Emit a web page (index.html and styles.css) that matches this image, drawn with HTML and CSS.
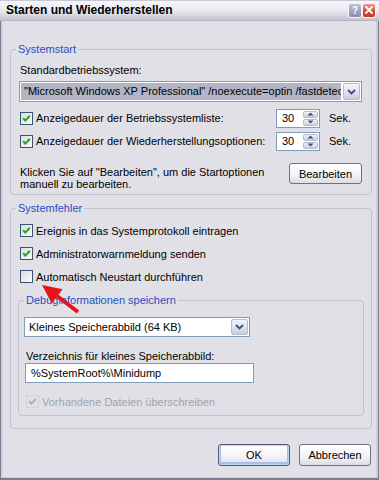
FILE: index.html
```html
<!DOCTYPE html>
<html lang="de">
<head>
<meta charset="utf-8">
<title>Starten und Wiederherstellen</title>
<link rel="stylesheet" href="styles.css">
</head>
<body>
<div class="window">
  <div class="titlebar">
    <span class="title">Starten und Wiederherstellen</span>
    <div class="caption-btns">
      <span class="cap-btn help">?</span>
      <span class="cap-btn close"><svg width="8" height="8" viewBox="0 0 8 8"><path d="M1 1 L7 7 M7 1 L1 7" stroke="#fff" stroke-width="1.8" stroke-linecap="square"/></svg></span>
    </div>
  </div>
  <div class="client">
    <fieldset class="group start">
      <legend>Systemstart</legend>
      <div class="label first">Standardbetriebssystem:</div>
      <div class="combo wide">
        <span class="combo-text selected">"Microsoft Windows XP Professional" /noexecute=optin /fastdetect</span>
        <span class="dd-btn"><svg width="9" height="6" viewBox="0 0 9 6"><path d="M1 1 L4.5 4.5 L8 1" fill="none" stroke="#3f4f72" stroke-width="1.8"/></svg></span>
      </div>
      <div class="spin-row">
        <span class="check on"><svg width="11" height="11" viewBox="0 0 11 11"><path d="M2.2 5.2 L4.4 7.6 L8.8 2.8" fill="none" stroke="#22a322" stroke-width="2"/></svg></span>
        <span class="row-label">Anzeigedauer der Betriebssystemliste:</span>
        <span class="spin"><span class="spin-val">30</span><span class="spin-arrows"><span class="arr"><svg width="7" height="4" viewBox="0 0 7 4"><path d="M0.5 3.5 L3.5 0.5 L6.5 3.5Z" fill="#3f4f72"/></svg></span><span class="arr"><svg width="7" height="4" viewBox="0 0 7 4"><path d="M0.5 0.5 L3.5 3.5 L6.5 0.5Z" fill="#3f4f72"/></svg></span></span></span>
        <span class="unit">Sek.</span>
      </div>
      <div class="spin-row second">
        <span class="check on"><svg width="11" height="11" viewBox="0 0 11 11"><path d="M2.2 5.2 L4.4 7.6 L8.8 2.8" fill="none" stroke="#22a322" stroke-width="2"/></svg></span>
        <span class="row-label">Anzeigedauer der Wiederherstellungsoptionen:</span>
        <span class="spin"><span class="spin-val">30</span><span class="spin-arrows"><span class="arr"><svg width="7" height="4" viewBox="0 0 7 4"><path d="M0.5 3.5 L3.5 0.5 L6.5 3.5Z" fill="#3f4f72"/></svg></span><span class="arr"><svg width="7" height="4" viewBox="0 0 7 4"><path d="M0.5 0.5 L3.5 3.5 L6.5 0.5Z" fill="#3f4f72"/></svg></span></span></span>
        <span class="unit">Sek.</span>
      </div>
      <div class="edit-row">
        <p>Klicken Sie auf "Bearbeiten", um die Startoptionen<br>manuell zu bearbeiten.</p>
        <button class="xp-btn">Bearbeiten</button>
      </div>
    </fieldset>

    <fieldset class="group errors">
      <legend>Systemfehler</legend>
      <div class="crow first">
        <span class="check on"><svg width="11" height="11" viewBox="0 0 11 11"><path d="M2.2 5.2 L4.4 7.6 L8.8 2.8" fill="none" stroke="#22a322" stroke-width="2"/></svg></span>
        <span class="row-label">Ereignis in das Systemprotokoll eintragen</span>
      </div>
      <div class="crow">
        <span class="check on"><svg width="11" height="11" viewBox="0 0 11 11"><path d="M2.2 5.2 L4.4 7.6 L8.8 2.8" fill="none" stroke="#22a322" stroke-width="2"/></svg></span>
        <span class="row-label">Administratorwarnmeldung senden</span>
      </div>
      <div class="crow">
        <span class="check"></span>
        <span class="row-label">Automatisch Neustart durchführen</span>
      </div>

      <fieldset class="group debug">
        <legend>Debuginformationen speichern</legend>
        <div class="combo small">
          <span class="combo-text">Kleines Speicherabbild (64 KB)</span>
          <span class="dd-btn"><svg width="9" height="6" viewBox="0 0 9 6"><path d="M1 1 L4.5 4.5 L8 1" fill="none" stroke="#3f4f72" stroke-width="1.8"/></svg></span>
        </div>
        <div class="label dir">Verzeichnis für kleines Speicherabbild:</div>
        <div class="edit">%SystemRoot%\Minidump</div>
        <div class="crow disabled">
          <span class="check dis"><svg width="11" height="11" viewBox="0 0 11 11"><path d="M2.2 5.2 L4.4 7.6 L8.8 2.8" fill="none" stroke="#aeaeb8" stroke-width="2"/></svg></span>
          <span class="row-label">Vorhandene Dateien überschreiben</span>
        </div>
      </fieldset>
    </fieldset>

    <div class="dialog-btns">
      <button class="xp-btn default">OK</button>
      <button class="xp-btn">Abbrechen</button>
    </div>
  </div>

  <svg class="annotation" width="379" height="480" viewBox="0 0 379 480">
    <line x1="78" y1="312" x2="57" y2="296" stroke="#e8141c" stroke-width="4"/>
    <polygon points="42,285 62.6,289.2 51.8,303.6" fill="#e8141c"/>
  </svg>
</div>
</body>
</html>
```

FILE: styles.css
```css
* { box-sizing: border-box; }
html, body { margin: 0; padding: 0; }
body {
  width: 379px;
  height: 480px;
  overflow: hidden;
  font-family: "Liberation Sans", Arial, sans-serif;
  font-size: 11px;
  color: #000;
  background: #fff;
}
.window {
  position: relative;
  width: 379px;
  height: 480px;
  background: #e1e0e6;
  box-shadow: inset 1px 0 0 #7c7c90, inset -1px 0 0 #7c7c90, inset 0 -2px 0 #7c7c90,
              inset 3px 0 0 #cfcfd8, inset -3px 0 0 #cfcfd8, inset 0 -3px 0 #cfcfd8;
  display: flex;
  flex-direction: column;
}
.titlebar {
  height: 21px;
  display: flex;
  align-items: center;
  padding-left: 6px;
  background: linear-gradient(#9a9ab2 0, #f6f6fa 1px, #ececf2 45%, #d8d8e2 75%, #c4c4d2 100%);
  border-bottom: 1px solid #b4b4c2;
}
.title {
  font-weight: bold;
  font-size: 12px;
  color: #000;
}
.caption-btns {
  margin-left: auto;
  margin-right: 3px;
  display: flex;
}
.cap-btn {
  width: 14px;
  height: 15px;
  border-radius: 3px;
  border: 1px solid #f4f4f8;
  display: flex;
  align-items: center;
  justify-content: center;
  color: #fff;
  font-weight: bold;
  font-size: 10px;
}
.help { background: linear-gradient(#bfc0d4, #8c8daa); }
.close { background: linear-gradient(#f09a86, #d24a2e 60%, #c43a20); }

.client {
  flex: 1;
  padding: 22px 7px 0 10px;
}
fieldset.group {
  margin: 0;
  border: 1px solid #c2c2ca;
  border-radius: 4px;
  padding: 0 9px 4px 9px;
  min-inline-size: auto;
}
fieldset.group legend {
  padding: 0 2px;
  margin-left: -4px;
  color: #1f4ec2;
  line-height: 13px;
}
.label { line-height: 13px; }
.label.first { margin-top: 8px; }

.combo {
  display: flex;
  background: #fff;
  border: 1px solid #7f9db9;
}
.combo.wide { margin-top: 4px; height: 21px; margin-left: -1px; }
.combo-text {
  flex: 1;
  margin: 1px;
  padding-left: 3px;
  white-space: nowrap;
  overflow: hidden;
  line-height: 17px;
}
.combo-text.selected { background: #b3b4c4; }
.dd-btn {
  width: 17px;
  flex: none;
  margin: 1px;
  border: 1px solid #b6bbd2;
  border-radius: 2px;
  background: linear-gradient(#f2f3fb, #dde0ee 60%, #c6cbe0);
  display: flex;
  align-items: center;
  justify-content: center;
}

.spin-row {
  display: flex;
  align-items: center;
  height: 20px;
  margin-top: 6px;
}
.spin-row.second { margin-top: 3px; }
.check {
  width: 13px;
  height: 13px;
  flex: none;
  border: 1px solid #3a5478;
  background: linear-gradient(135deg, #dcdce2, #fbfbfc);
  display: flex;
  align-items: center;
  justify-content: center;
}
.check.dis { border-color: #d2d2d8; background: #e1e0e6; }
.row-label { margin-left: 3px; flex: 1; white-space: nowrap; }
.spin {
  width: 44px;
  height: 19px;
  flex: none;
  display: flex;
  border: 1px solid #7f9db9;
  background: #fff;
}
.spin-val { flex: 1; padding-left: 5px; line-height: 17px; }
.spin-arrows {
  width: 15px;
  margin: 1px;
  display: flex;
  flex-direction: column;
  gap: 1px;
}
.arr {
  flex: 1;
  border: 1px solid #b6bbd2;
  border-radius: 2px;
  background: linear-gradient(#f2f3fb, #c9cde1);
  display: flex;
  align-items: center;
  justify-content: center;
}
.unit { width: 33px; margin-left: 9px; flex: none; }

.edit-row {
  display: flex;
  justify-content: space-between;
  align-items: flex-start;
  margin-top: 12px;
}
.edit-row p { margin: 3px 0 0; line-height: 12px; }

.xp-btn {
  width: 73px;
  height: 21px;
  padding: 0;
  border: 1px solid #6e7088;
  border-radius: 3px;
  background: linear-gradient(#ffffff, #f4f4f8 55%, #dcdce6);
  font-family: "Liberation Sans", Arial, sans-serif;
  font-size: 11px;
  color: #000;
}

.errors { margin-top: 7px !important; padding-bottom: 12px !important; }
.crow {
  display: flex;
  align-items: center;
  height: 17px;
  margin-top: 6px;
}
.crow.first { margin-top: 7px; }

fieldset.group.debug {
  margin: 9px -2px 0 -2px;
  padding: 0 5px 5px 5px;
}
fieldset.group.debug legend { margin-left: 0; }
.combo.small { width: 226px; height: 20px; margin-top: 10px; }
.combo.small .combo-text { padding-left: 3px; line-height: 16px; }
.label.dir { margin-top: 13px; padding-left: 2px; }
.edit {
  width: 229px;
  height: 20px;
  margin-left: 1px;
  border: 1px solid #7f9db9;
  background: #fff;
  padding-left: 5px;
  line-height: 18px;
}
.crow.disabled { margin-top: 10px; padding-left: 2px; }
.crow.disabled .row-label { color: #a3a3ad; }

.dialog-btns {
  display: flex;
  justify-content: flex-end;
  gap: 9px;
  margin-top: 15px;
  padding-right: 1px;
}
.dialog-btns .xp-btn { width: 72px; height: 22px; }
.xp-btn.default {
  border-color: #55587a;
  box-shadow: inset 0 0 0 1px #c3d3f4, inset 0 -1px 0 2px #a9bde8;
}

.annotation {
  position: absolute;
  left: 0;
  top: 0;
  pointer-events: none;
}
```
